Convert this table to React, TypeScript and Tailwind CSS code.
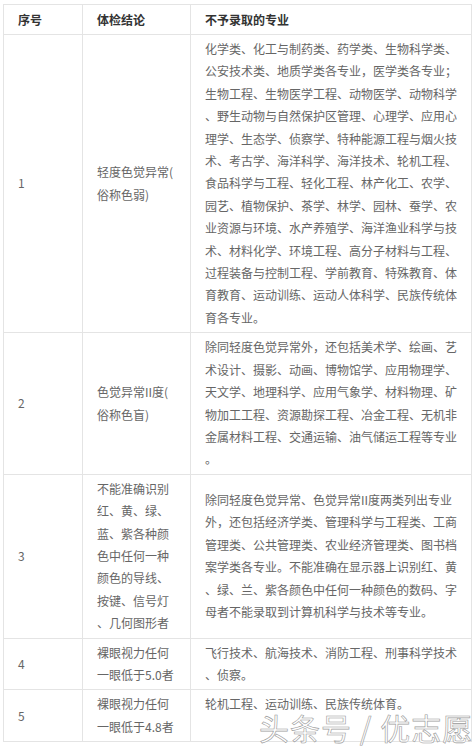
const rows = [
  {
    no: "1",
    cond: ["轻度色觉异常(", "俗称色弱)"],
    majors: [
      "化学类、化工与制药类、药学类、生物科学类、",
      "公安技术类、地质学类各专业，医学类各专业；",
      "生物工程、生物医学工程、动物医学、动物科学",
      "、野生动物与自然保护区管理、心理学、应用心",
      "理学、生态学、侦察学、特种能源工程与烟火技",
      "术、考古学、海洋科学、海洋技术、轮机工程、",
      "食品科学与工程、轻化工程、林产化工、农学、",
      "园艺、植物保护、茶学、林学、园林、蚕学、农",
      "业资源与环境、水产养殖学、海洋渔业科学与技",
      "术、材料化学、环境工程、高分子材料与工程、",
      "过程装备与控制工程、学前教育、特殊教育、体",
      "育教育、运动训练、运动人体科学、民族传统体",
      "育各专业。",
    ],
  },
  {
    no: "2",
    cond: ["色觉异常II度(", "俗称色盲)"],
    majors: [
      "除同轻度色觉异常外，还包括美术学、绘画、艺",
      "术设计、摄影、动画、博物馆学、应用物理学、",
      "天文学、地理科学、应用气象学、材料物理、矿",
      "物加工工程、资源勘探工程、冶金工程、无机非",
      "金属材料工程、交通运输、油气储运工程等专业",
      "。",
    ],
  },
  {
    no: "3",
    cond: [
      "不能准确识别",
      "红、黄、绿、",
      "蓝、紫各种颜",
      "色中任何一种",
      "颜色的导线、",
      "按键、信号灯",
      "、几何图形者",
    ],
    majors: [
      "除同轻度色觉异常、色觉异常II度两类列出专业",
      "外，还包括经济学类、管理科学与工程类、工商",
      "管理类、公共管理类、农业经济管理类、图书档",
      "案学类各专业。不能准确在显示器上识别红、黄",
      "、绿、兰、紫各颜色中任何一种颜色的数码、字",
      "母者不能录取到计算机科学与技术等专业。",
    ],
  },
  {
    no: "4",
    cond: ["裸眼视力任何", "一眼低于5.0者"],
    majors: ["飞行技术、航海技术、消防工程、刑事科学技术", "、侦察。"],
  },
  {
    no: "5",
    cond: ["裸眼视力任何", "一眼低于4.8者"],
    majors: ["轮机工程、运动训练、民族传统体育。", "\u00a0"],
  },
];

const Lines = ({ lines }: { lines: string[] }) => (
  <>
    {lines.map((line, i) => (
      <div key={i} className="whitespace-nowrap">
        {line}
      </div>
    ))}
  </>
);

const App = () => {
  return (
    <div
      className="relative min-h-[751px] w-[474px] bg-white pl-[3px] pt-[4px]"
      style={{ fontFamily: '"Noto Sans CJK SC", "Noto Sans", sans-serif' }}
    >
      <table className="w-[468px] table-fixed border-collapse text-[12px] leading-[22.4px] text-[#666]">
        <colgroup>
          <col className="w-[79px]" />
          <col className="w-[108px]" />
          <col className="w-[281px]" />
        </colgroup>
        <thead>
          <tr className="h-[30px] text-[#333]">
            <th className="border border-[#e4e4e4] px-[14px] pt-[2px] text-left font-bold">序号</th>
            <th className="border border-[#e4e4e4] px-[14px] pt-[2px] text-left font-bold">体检结论</th>
            <th className="border border-[#e4e4e4] px-[14px] pt-[2px] text-left font-bold">
              不予录取的专业
            </th>
          </tr>
        </thead>
        <tbody>
          {rows.map((row) => (
            <tr key={row.no}>
              <td className="border border-[#e4e4e4] px-[14px] py-[3px] align-middle">
                {row.no}
              </td>
              <td className="border border-[#e4e4e4] px-[14px] py-[3px] align-middle">
                <Lines lines={row.cond} />
              </td>
              <td className="border border-[#e4e4e4] px-[14px] py-[3px] align-middle">
                <Lines lines={row.majors} />
              </td>
            </tr>
          ))}
        </tbody>
      </table>

      {/* watermark */}
      <div className="pointer-events-none absolute left-[259px] top-[707px] whitespace-nowrap text-[30px] leading-[40px] tracking-[1px] text-white/90 [-webkit-text-stroke:0.6px_#9a9a9a]">
        头条号 / 优志愿
      </div>
    </div>
  );
};

export default App;
